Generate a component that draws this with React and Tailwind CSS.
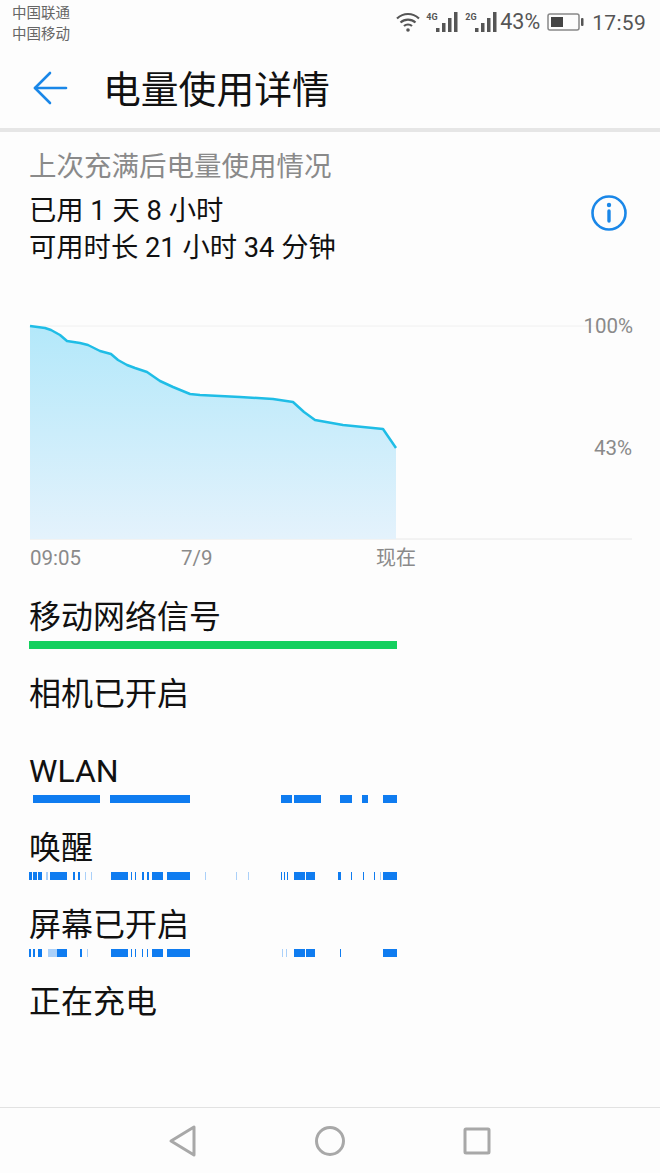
const linePoints = '30,326 45,328 51,330 60,335 67,341 80,343 88,345 100,351 111,354 118,360 127,365 135,368 147,372 160,381 173,387 190,394 200,395 240,397 273,399 293,402 304,412 315,420 343,425 383,429 396,448'

// [start, end] in page px, light ones have a third value
const wlan = [[33, 100], [110, 190], [281, 292], [294, 321], [340, 352], [362, 368], [383, 397]]
const wake = [
  [29, 32], [33, 37], [38, 42], [46, 48, 1], [50, 67], [73, 75], [78, 80], [85, 86, 1], [91, 92, 1],
  [111, 128], [131, 132], [135, 136], [142, 144], [147, 149], [152, 163], [167, 190], [205, 206, 1],
  [236, 237, 1], [248, 249, 1], [281, 282], [284, 285], [287, 288], [294, 305], [306, 315], [338, 341],
  [351, 352], [363, 364], [374, 375], [380, 381, 1], [383, 397],
]
const screen = [
  [29, 31], [33, 35], [38, 42], [48, 57, 1], [57, 67], [80, 82], [87, 88, 1],
  [111, 128], [131, 132], [135, 136], [142, 143], [147, 148], [152, 163], [167, 190],
  [282, 283, 1], [286, 287, 1], [294, 305], [306, 315], [340, 341], [383, 397],
]

function Signal({ label }) {
  return (
    <div className="relative w-[33px] h-[22px]">
      <span className="absolute left-0 top-[3px] text-[9px] leading-[9px] font-bold">{label}</span>
      <svg width="33" height="22" viewBox="0 0 33 22" className="absolute left-0 top-0" fill="#555">
        <rect x="10" y="18" width="3.500" height="4" />
        <rect x="16" y="13" width="3.500" height="9" />
        <rect x="22" y="8" width="3.500" height="14" />
        <rect x="28" y="2" width="3.500" height="20" />
      </svg>
    </div>
  )
}

function StatusBar() {
  return (
    <div className="h-[52px] flex justify-between pl-3 pr-[14px]">
      <div className="pt-[3px] text-[14.5px] leading-[21px] text-[#666]">
        <p>中国联通</p>
        <p>中国移动</p>
      </div>
      <div className="flex items-start pt-[10px] text-[#555]">
        <svg width="24" height="20" viewBox="0 0 24 20" fill="none" stroke="#555" strokeWidth="2.200" className="mt-[2px]">
          <path d="M1 6.500c6.500-6 15.500-6 22 0" />
          <path d="M4.500 10.500c4.200-3.800 10.800-3.800 15 0" />
          <path d="M8 14c2.200-2 5.800-2 8 0" />
          <circle cx="12" cy="18" r="1.800" fill="#555" stroke="none" />
        </svg>
        <div className="ml-[6px]"><Signal label="4G" /></div>
        <div className="ml-[6px]"><Signal label="2G" /></div>
        <span className="text-[21.5px] leading-[24px] ml-[2px]">43%</span>
        <svg width="37" height="18" viewBox="0 0 37 18" className="ml-[7px] mt-[3px]">
          <rect x="1" y="1" width="31" height="16" rx="2" fill="none" stroke="#888" strokeWidth="1.500" />
          <rect x="4" y="4" width="12" height="10" fill="#444" />
          <rect x="34" y="5" width="2.500" height="8" rx="1" fill="#555" />
        </svg>
        <span className="text-[21px] leading-[26px] ml-[8px] tracking-[0.3px]">17:59</span>
      </div>
    </div>
  )
}

function Header() {
  return (
    <div className="h-[76px] flex items-center pl-[33px] border-b-4 border-[#e6e6e6] box-content">
      <svg width="36" height="34" viewBox="0 0 36 34" fill="none" stroke="#1a87e8" strokeWidth="2.600" strokeLinecap="round" strokeLinejoin="round" className="mb-[4px]">
        <path d="M33 17H2" />
        <path d="M17 2 2 17l15 15" />
      </svg>
      <h1 className="ml-[34px] text-[37.8px] leading-[44px] font-normal text-[#111]">电量使用详情</h1>
    </div>
  )
}

function Chart() {
  return (
    <div className="relative h-[226px] mt-[54px]">
      <svg width="660" height="226" viewBox="0 320 660 226" className="block">
        <defs>
          <linearGradient id="fill" x1="0" y1="0" x2="0" y2="1">
            <stop offset="0" stopColor="#b3e8fa" />
            <stop offset="1" stopColor="#e4f2fc" />
          </linearGradient>
        </defs>
        <path d="M30 326H632" stroke="#f0f0f0" strokeWidth="1" />
        <path d="M30 539H632" stroke="#e8e8e8" strokeWidth="1" />
        <polygon points={`${linePoints} 396,539 30,539`} fill="url(#fill)" />
        <polyline points={linePoints} fill="none" stroke="#1fbde6" strokeWidth="2.500" strokeLinejoin="round" />
      </svg>
      <span className="absolute right-[27px] top-[-6px] text-[20.5px] leading-[24px] text-[#8a8a8a]">100%</span>
      <span className="absolute right-[28px] top-[116px] text-[20.5px] leading-[24px] text-[#8a8a8a]">43%</span>
    </div>
  )
}

function Axis() {
  return (
    <div className="flex h-[24px] pl-[30px] text-[20.5px] leading-[24px] text-[#8a8a8a]">
      <span className="w-[151px]">09:05</span>
      <span className="w-[195px]">7/9</span>
      <span className="text-[20px]">现在</span>
    </div>
  )
}

function Track({ segments, color = '#0f7cf0' }) {
  return (
    <svg width="660" height="8" viewBox="0 0 660 8" className="block">
      {segments.map(([a, b, light], i) => (
        <rect key={i} x={a} y="0" width={b - a} height="8" fill={color} opacity={light ? 0.35 : 1} />
      ))}
    </svg>
  )
}

function Row({ label, children }) {
  return (
    <div className="h-[77px] pl-[29px]">
      <div className="h-[44px] pt-[1px] text-[32px] leading-[44px] text-[#111]">{label}</div>
      <div className="-ml-[29px] mt-[3px]">{children}</div>
    </div>
  )
}

function NavBar() {
  return (
    <div className="mt-auto h-[66px] border-t border-[#e2e2e2] flex items-center justify-center gap-[117px]">
      <svg width="30" height="34" viewBox="0 0 30 34" fill="none" stroke="#a8a8a8" strokeWidth="3" strokeLinejoin="round">
        <path d="M26 3v28L3 17z" />
      </svg>
      <svg width="30" height="32" viewBox="0 0 30 32" fill="none" stroke="#a8a8a8" strokeWidth="3">
        <circle cx="15" cy="16" r="13.500" />
      </svg>
      <svg width="30" height="30" viewBox="0 0 30 30" fill="none" stroke="#a8a8a8" strokeWidth="3" strokeLinejoin="round">
        <rect x="3" y="3" width="24" height="24" rx="1" />
      </svg>
    </div>
  )
}

export default function App() {
  return (
    <div className="w-[660px] h-[1173px] bg-[#fdfdfd] flex flex-col overflow-hidden font-['Roboto','Noto_Sans_CJK_SC',sans-serif]">
      <StatusBar />
      <Header />

      <div className="flex justify-between pt-[16px] pl-[29px] pr-[32px]">
        <div>
          <p className="text-[27.5px] leading-[38px] text-[#8a8a8a]">上次充满后电量使用情况</p>
          <p className="mt-[7px] text-[27.3px] leading-[37px] text-[#111]">已用 1 天 8 小时</p>
          <p className="text-[27.3px] leading-[37px] text-[#111]">可用时长 21 小时 34 分钟</p>
        </div>
        <svg width="38" height="38" viewBox="0 0 38 38" fill="none" className="mt-[46px]">
          <circle cx="19" cy="19" r="16.500" stroke="#1a87e8" strokeWidth="2.600" />
          <circle cx="19" cy="11" r="2.200" fill="#1a87e8" />
          <path d="M19 17v10" stroke="#1a87e8" strokeWidth="3.400" strokeLinecap="round" />
        </svg>
      </div>

      <div className="-mt-[1px]">
        <Chart />
      </div>
      <Axis />

      <div className="mt-[24px]">
        <Row label="移动网络信号"><Track segments={[[29, 397]]} color="#14d05e" /></Row>
        <Row label="相机已开启" />
        <Row label="WLAN"><Track segments={wlan} /></Row>
        <Row label="唤醒"><Track segments={wake} /></Row>
        <Row label="屏幕已开启"><Track segments={screen} /></Row>
        <Row label="正在充电" />
      </div>

      <NavBar />
    </div>
  )
}
